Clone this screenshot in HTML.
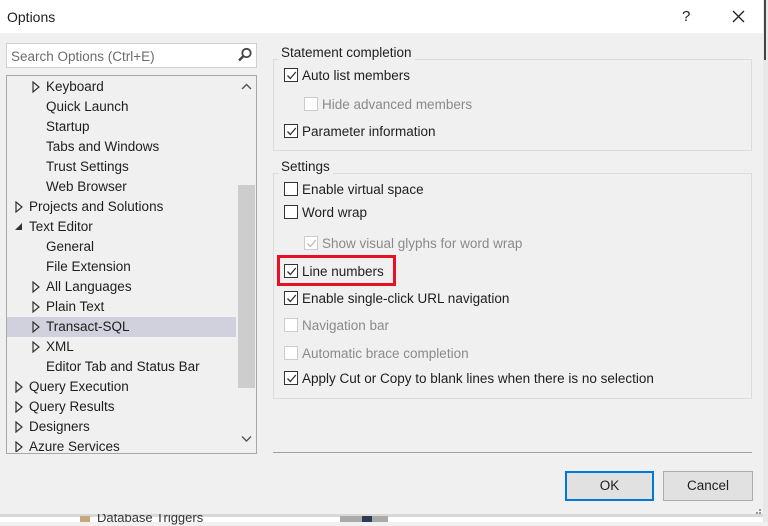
<!DOCTYPE html>
<html><head><style>
*{margin:0;padding:0;box-sizing:border-box}
body{width:768px;height:522px;overflow:hidden;background:#f0f0f0;font-family:"Liberation Sans",sans-serif;font-size:13.5px;color:#1e1e1e;position:relative}
.a{position:absolute;white-space:nowrap}
.title{left:0;top:0;width:763px;height:33px;background:#fff}
.row{position:absolute;height:20px;line-height:20px;white-space:nowrap}
.cb{position:absolute;width:14px;height:14px;border:1px solid #333;background:#fff}
.cb.dis{border-color:#ccc}
.cb svg{position:absolute;left:1px;top:1px}
.lbl{position:absolute;white-space:nowrap;line-height:16px}
.gray{color:#8a8a8a}
</style></head><body>
<div class="a title"></div>
<div class="a" style="left:7px;top:9px;font-size:14px">Options</div>
<div class="a" style="left:682px;top:8px;font-size:15px">?</div>
<svg class="a" style="left:732px;top:10px" width="13" height="13"><path d="M1 1L12 12M12 1L1 12" stroke="#222" stroke-width="1.3"/></svg>

<div class="a" style="left:6px;top:43px;width:251px;height:25px;background:#fff;border:1px solid #d0d0d0"></div>
<div class="a" style="left:11px;top:49px;color:#6d6d6d">Search Options (Ctrl+E)</div>
<svg class="a" style="left:237px;top:47px" width="16" height="16"><circle cx="9.5" cy="6" r="4.2" fill="none" stroke="#444" stroke-width="1.8"/><path d="M6.5 9L2 13.5" stroke="#444" stroke-width="2.4"/></svg>

<div class="a" style="left:6px;top:75px;width:251px;height:379px;border:1px solid #a8a8a8;background:#f0f0f0;overflow:hidden">
<div class="a" style="left:0;top:241px;width:229px;height:20px;background:#d0d1dc"></div>
<div class="a" style="left:230px;top:0;width:19px;height:377px;background:#f0f0f0"></div>
<div class="a" style="left:231px;top:109px;width:17px;height:203px;background:#cdcdcd"></div>
<svg class="a" style="left:234px;top:7px" width="11" height="8"><path d="M1 6L5.5 1.5L10 6" fill="none" stroke="#555" stroke-width="1.4"/></svg>
<svg class="a" style="left:234px;top:359px" width="11" height="8"><path d="M1 1.5L5.5 6L10 1.5" fill="none" stroke="#555" stroke-width="1.4"/></svg>
</div>
<div id="tree"></div>

<div class="a" style="left:273px;top:59px;width:479px;height:92px;border:1px solid #dcdcdc"></div>
<div class="a" style="left:278px;top:45px;background:#f0f0f0;padding:0 3px">Statement completion</div>
<div class="a" style="left:273px;top:173px;width:479px;height:226px;border:1px solid #dcdcdc"></div>
<div class="a" style="left:278px;top:159px;background:#f0f0f0;padding:0 3px">Settings</div>
<div class="a" style="left:277px;top:255px;width:119px;height:31px;border:3px solid #e81123"></div>
<div class="a" style="left:273px;top:452px;width:479px;height:1px;background:#a0a0a0"></div>

<div class="a" style="left:565px;top:471px;width:89px;height:30px;border:2px solid #0078d7;background:#e1e1e1;text-align:center;line-height:26px">OK</div>
<div class="a" style="left:663px;top:471px;width:90px;height:30px;border:1px solid #adadad;background:#e1e1e1;text-align:center;line-height:28px">Cancel</div>
<svg class="a" style="left:752px;top:508px" width="10" height="10" fill="#999"><rect x="7" y="1" width="2" height="2"/><rect x="4" y="4" width="2" height="2"/><rect x="7" y="4" width="2" height="2"/><rect x="1" y="7" width="2" height="2"/><rect x="4" y="7" width="2" height="2"/><rect x="7" y="7" width="2" height="2"/></svg>

<div class="a" style="left:0;top:514px;width:768px;height:8px;background:#d8d8d8"></div>
<div class="a" style="left:0;top:517px;width:768px;height:5px;background:#fff"></div>
<div class="a" style="left:80px;top:516px;width:10px;height:6px;background:#c8a878"></div>
<div class="a" style="left:97px;top:510px;font-size:13px;color:#333;line-height:16px;clip-path:inset(4px 0 0 0)">Database Triggers</div>
<div class="a" style="left:340px;top:516px;width:48px;height:6px;background:#aaa"></div>
<div class="a" style="left:362px;top:516px;width:10px;height:6px;background:#2b3a55"></div>
<div class="a" style="left:763px;top:0;width:5px;height:522px;background:#e8e8e8"></div>
<div class="a" style="left:764px;top:0;width:2px;height:60px;background:#444"></div>

<script>
var items=[[2,1,"Keyboard"],[2,0,"Quick Launch"],[2,0,"Startup"],[2,0,"Tabs and Windows"],[2,0,"Trust Settings"],[2,0,"Web Browser"],[1,1,"Projects and Solutions"],[1,2,"Text Editor"],[2,0,"General"],[2,0,"File Extension"],[2,1,"All Languages"],[2,1,"Plain Text"],[2,1,"Transact-SQL"],[2,1,"XML"],[2,0,"Editor Tab and Status Bar"],[1,1,"Query Execution"],[1,1,"Query Results"],[1,1,"Designers"],[1,1,"Azure Services"]];
var h="";items.forEach(function(it,i){var y=77+i*20;var x=it[0]==1?29:46;
if(it[1]==1)h+='<svg class="a" style="left:'+(x-14)+'px;top:'+(y+4)+'px" width="8" height="12"><path d="M1 1L7 6L1 11Z" fill="none" stroke="#333" stroke-width="1.2"/></svg>';
if(it[1]==2)h+='<svg class="a" style="left:'+(x-15)+'px;top:'+(y+5)+'px" width="9" height="9"><path d="M8 1L8 8L1 8Z" fill="#333"/></svg>';
h+='<div class="row" style="left:'+x+'px;top:'+y+'px">'+it[2]+'</div>';});
var tr=document.getElementById("tree");tr.outerHTML='<div class="a" style="left:0;top:0;width:243px;height:452px;overflow:hidden">'+h+'</div>';
var cbs=[[284,75,1,0,"Auto list members"],[304,104,0,1,"Hide advanced members"],[284,131,1,0,"Parameter information"],[284,189,0,0,"Enable virtual space"],[284,212,0,0,"Word wrap"],[304,243,1,1,"Show visual glyphs for word wrap"],[284,271,1,0,"Line numbers"],[284,298,1,0,"Enable single-click URL navigation"],[284,325,0,1,"Navigation bar"],[284,353,0,1,"Automatic brace completion"],[284,378,1,0,"Apply Cut or Copy to blank lines when there is no selection"]];
var s="";cbs.forEach(function(c){var x=c[0],y=c[1]-7;
s+='<div class="cb'+(c[3]?' dis':'')+'" style="left:'+x+'px;top:'+y+'px">'+(c[2]?'<svg width="11" height="11"><path d="M1.5 5.5L4.3 8.5L9.8 2" fill="none" stroke="'+(c[3]?'#bbb':'#333')+'" stroke-width="1.3"/></svg>':'')+'</div>';
s+='<div class="lbl'+(c[3]?' gray':'')+'" style="left:'+(x+18)+'px;top:'+y+'px">'+c[4]+'</div>';});
document.body.insertAdjacentHTML("beforeend",s);
</script>
</body></html>
